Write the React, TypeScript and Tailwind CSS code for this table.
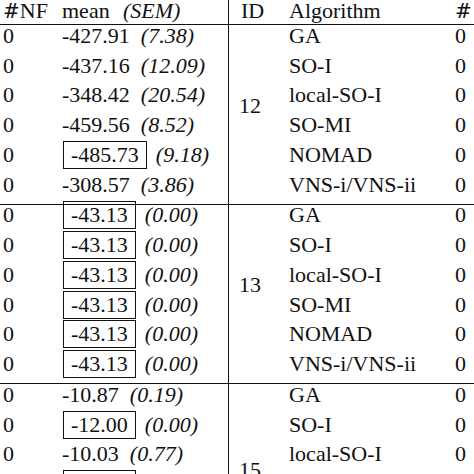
import React from 'react'

type Row = { alg: string; mean: string; sem: string; boxed?: boolean }

type Section = { id: string; idTop: string; rows: Row[] }

const SECTIONS: Section[] = [
  {
    id: '12',
    idTop: 'pt-[70px]',
    rows: [
      { alg: 'GA', mean: '-427.91', sem: '(7.38)' },
      { alg: 'SO-I', mean: '-437.16', sem: '(12.09)' },
      { alg: 'local-SO-I', mean: '-348.42', sem: '(20.54)' },
      { alg: 'SO-MI', mean: '-459.56', sem: '(8.52)' },
      { alg: 'NOMAD', mean: '-485.73', sem: '(9.18)', boxed: true },
      { alg: 'VNS-i/VNS-ii', mean: '-308.57', sem: '(3.86)' },
    ],
  },
  {
    id: '13',
    idTop: 'pt-[69px]',
    rows: [
      { alg: 'GA', mean: '-43.13', sem: '(0.00)', boxed: true },
      { alg: 'SO-I', mean: '-43.13', sem: '(0.00)', boxed: true },
      { alg: 'local-SO-I', mean: '-43.13', sem: '(0.00)', boxed: true },
      { alg: 'SO-MI', mean: '-43.13', sem: '(0.00)', boxed: true },
      { alg: 'NOMAD', mean: '-43.13', sem: '(0.00)', boxed: true },
      { alg: 'VNS-i/VNS-ii', mean: '-43.13', sem: '(0.00)', boxed: true },
    ],
  },
  {
    id: '15',
    idTop: 'pt-[75px]',
    rows: [
      { alg: 'GA', mean: '-10.87', sem: '(0.19)' },
      { alg: 'SO-I', mean: '-12.00', sem: '(0.00)', boxed: true },
      { alg: 'local-SO-I', mean: '-10.03', sem: '(0.77)' },
      { alg: 'SO-MI', mean: '-12.00', sem: '(0.00)', boxed: true },
      { alg: 'NOMAD', mean: '-11.52', sem: '(0.31)' },
      { alg: 'VNS-i/VNS-ii', mean: '-10.64', sem: '(0.42)' },
    ],
  },
]

// wider # like the TeX glyph
const hash = <span className="font-['DejaVu_Serif',serif] text-[20px]">#</span>

function MeanCell({ row }: { row: Row }) {
  if (row.boxed) {
    return (
      <div className="flex items-center">
        <div className="ml-px flex h-[28px] items-center border border-[#111] px-[7px]">{row.mean}</div>
        <span className="ml-[9px] italic">{row.sem}</span>
      </div>
    )
  }
  return (
    <div className="flex items-center">
      <span>{row.mean}</span>
      <span className="ml-[11px] italic">{row.sem}</span>
    </div>
  )
}

function SectionBlock({ section }: { section: Section }) {
  return (
    <>
      <div className="flex">
        <div className="w-[228px]">
          {section.rows.map((r, i) => (
            <div key={i} className="flex h-[29.75px] items-center pb-2">
              <div className="w-[62px] pl-[3px]">0</div>
              <MeanCell row={r} />
            </div>
          ))}
        </div>
        <div className="w-px bg-[#111]" />
        <div className={`w-[60px] pl-[10px] ${section.idTop}`}>{section.id}</div>
        <div className="flex-1">
          {section.rows.map((r, i) => (
            <div key={i} className="flex h-[29.75px] items-center pb-2">
              <div className="w-[166px]">{r.alg}</div>
              <div>0</div>
            </div>
          ))}
        </div>
      </div>
      <div className="h-px bg-[#111]" />
    </>
  )
}

export default function App() {
  return (
    <div className="h-[474px] w-[474px] overflow-hidden bg-white font-['Liberation_Serif','Times_New_Roman',serif] text-[22px] leading-[22px] text-[#111]">
      <div className="flex h-[24px] leading-[20px]">
        <div className="flex w-[228px] items-center pb-[3px]">
          <div className="w-[62px] pl-[3px] whitespace-nowrap">
            {hash}NF
          </div>
          <span className="w-[61px]">mean</span>
          <span className="italic">(SEM)</span>
        </div>
        <div className="w-px bg-[#111]" />
        <div className="flex flex-1 items-center pb-[3px]">
          <div className="w-[60px] pl-[12px]">ID</div>
          <div className="w-[166px]">Algorithm</div>
          <div>{hash}</div>
        </div>
      </div>
      <div className="h-px bg-[#111]" />
      {SECTIONS.map((s) => (
        <SectionBlock key={s.id} section={s} />
      ))}
    </div>
  )
}
